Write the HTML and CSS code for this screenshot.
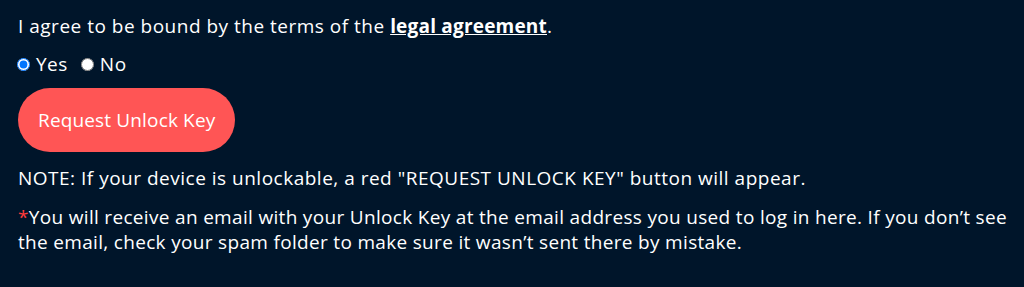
FILE: index.html
```html
<!DOCTYPE html>
<html lang="en">
<head>
<meta charset="utf-8">
<link rel="stylesheet" href="styles.css">
</head>
<body>
<main class="panel">
  <p class="agree">I agree to be bound by the terms of the <a href="#" class="legal">legal agreement</a>.</p>
  <div class="choices">
    <label class="choice"><input type="radio" name="agree" checked> Yes</label>
    <label class="choice"><input type="radio" name="agree"> No</label>
  </div>
  <button class="unlock">Request Unlock Key</button>
  <p class="note">NOTE: If your device is unlockable, a red "REQUEST UNLOCK KEY" button will appear.</p>
  <p class="email"><span class="star">*</span>You will receive an email with your Unlock Key at the email address you used to log in here. If you don’t see the email, check your spam folder to make sure it wasn’t sent there by mistake.</p>
</main>
</body>
</html>
```
FILE: styles.css
```css
html, body {
  margin: 0;
  padding: 0;
  background: #00152a;
}
body {
  font-family: "Open Sans", sans-serif;
  color: #ffffff;
  font-size: 19px;
  letter-spacing: 0.5px;
}
.panel {
  padding: 10px 4px 0 18px;
}
.agree {
  margin: 0 0 10px;
  line-height: 32px;
}
.legal {
  color: #ffffff;
  font-weight: 700;
  letter-spacing: 0.2px;
  text-decoration: underline;
}
.choices {
  display: flex;
  gap: 14px;
  align-items: center;
  line-height: 24px;
}
.choice {
  display: flex;
  align-items: center;
  gap: 6px;
}
.choice input {
  margin: 0 0 0 -1px;
  width: 13px;
  height: 13px;
}
.unlock {
  margin-top: 12px;
  height: 64px;
  padding: 0 20px;
  border: none;
  border-radius: 32px;
  background: #ff5555;
  color: #ffffff;
  font-family: inherit;
  font-size: 19px;
  font-weight: 500;
  letter-spacing: 0.15px;
}
.note {
  margin: 14px 0 15px;
  line-height: 24px;
}
.email {
  margin: 0;
  line-height: 25px;
  letter-spacing: 0.32px;
}
.star {
  color: #ff3b3b;
}
```
